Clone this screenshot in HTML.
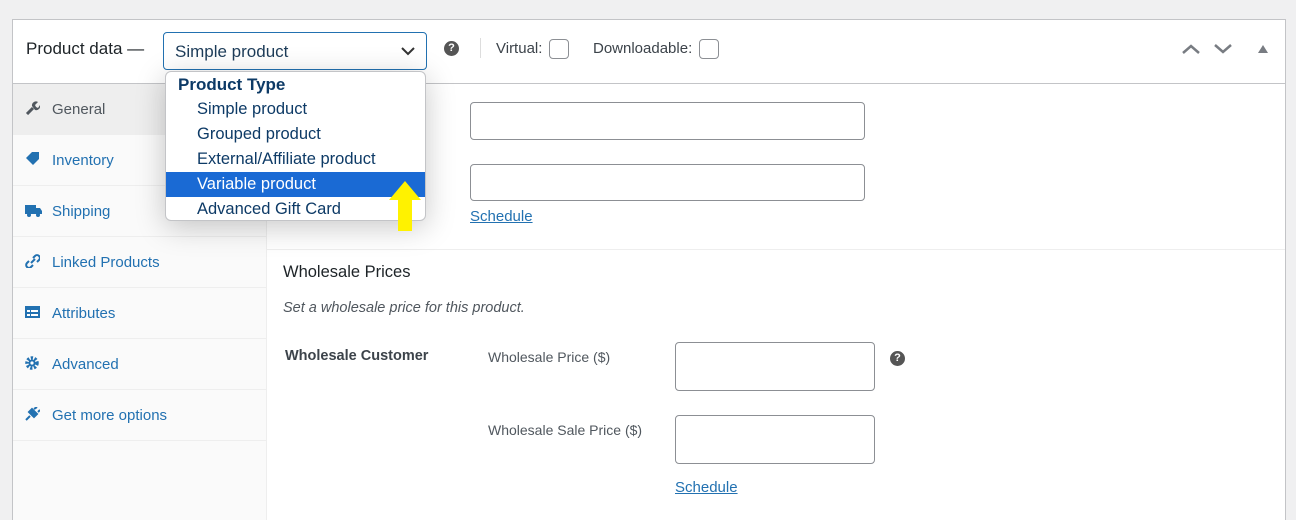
<!DOCTYPE html>
<html style="height:520px;overflow:hidden"><head><style>
*{box-sizing:border-box;margin:0;padding:0}
body{width:1296px;height:520px;background:#f0f0f1;font-family:"Liberation Sans",sans-serif;position:relative;overflow:hidden;color:#1d2327}
.a{position:absolute;white-space:nowrap}
.panel{position:absolute;left:12px;top:19px;width:1274px;height:501px;background:#fff;border:1px solid #c3c4c7;border-bottom:none}
.side{position:absolute;left:13px;top:84px;width:254px;height:436px;background:#fafafa;border-right:1px solid #eee}
.row{position:absolute;left:0;width:254px;height:51px;border-bottom:1px solid #eee;color:#2271b1;font-size:15px}
.row span{position:absolute;left:39px;top:17px}
.row i{position:absolute;left:12px;top:17px;width:15px;height:14px}
.inp{position:absolute;border:1px solid #8c8f94;border-radius:4px;background:#fff}
.lnk{color:#2271b1;text-decoration:underline;font-size:15px}
.help{position:absolute;width:15px;height:15px;border-radius:50%;background:#555;color:#fff;font-size:11px;font-weight:bold;text-align:center;line-height:15px}
.cb{position:absolute;width:20px;height:20px;border:1px solid #8c8f94;border-radius:4px;background:#fff}
.dd{position:absolute;left:165px;top:71px;width:261px;height:150px;background:#fff;border:1px solid #c3c4c7;border-radius:6px;box-shadow:0 6px 30px rgba(0,0,0,.22);font-size:16.5px;color:#0d3a66;overflow:hidden}
.dd div{position:absolute;left:0;width:100%;height:25px;padding-left:31px;line-height:25px}
</style></head><body>
<div class="panel"></div>
<div class="a" style="left:13px;top:83px;width:1272px;height:1px;background:#c3c4c7"></div>
<div class="a" style="left:26px;top:39px;font-size:17px;color:#1d2327">Product data —</div>
<div class="a" style="left:163px;top:32px;width:264px;height:38px;border:1px solid #2271b1;border-radius:4px;background:#fff"></div>
<div class="a" style="left:175px;top:42px;font-size:17px;color:#1d3c59">Simple product</div>
<svg class="a" style="left:400px;top:45px" width="16" height="12" viewBox="0 0 16 12"><path d="M2 3l6 6 6-6" fill="none" stroke="#333" stroke-width="2"/></svg>
<div class="help" style="left:444px;top:41px">?</div>
<div class="a" style="left:480px;top:38px;width:1px;height:20px;background:#ddd"></div>
<div class="a" style="left:496px;top:40px;font-size:15px;color:#3c434a">Virtual:</div>
<div class="cb" style="left:549px;top:39px"></div>
<div class="a" style="left:593px;top:40px;font-size:15px;color:#3c434a">Downloadable:</div>
<div class="cb" style="left:699px;top:39px"></div>
<svg class="a" style="left:1181px;top:42px" width="20" height="14"><path d="M2 11l8-7 8 7" fill="none" stroke="#787c82" stroke-width="2.5"/></svg>
<svg class="a" style="left:1213px;top:42px" width="20" height="14"><path d="M2 3l8 7 8-7" fill="none" stroke="#787c82" stroke-width="2.5"/></svg>
<svg class="a" style="left:1257px;top:44px" width="12" height="10"><path d="M1 9l5-8 5 8z" fill="#787c82"/></svg>

<div class="side">
<div class="row" style="top:0;background:#eee;color:#50575e"><i><svg width="15" height="14"><path d="M2 13l6-6" stroke="#50575e" stroke-width="3"/><path d="M7 5a4 4 0 0 1 6-4l-3 3 1 2 2 1 2-3a4 4 0 0 1-5 5z" fill="#50575e"/></svg></i><span>General</span></div>
<div class="row" style="top:51px"><i><svg width="15" height="14"><path d="M1 6l6-6h7v7l-6 6z" fill="#2271b1"/></svg></i><span>Inventory</span></div>
<div class="row" style="top:102px"><i><svg width="17" height="14"><path d="M0 2h11v9H0zM11 5h4l2 3v3h-6z" fill="#2271b1"/><circle cx="4" cy="12" r="2" fill="#2271b1"/><circle cx="13" cy="12" r="2" fill="#2271b1"/></svg></i><span>Shipping</span></div>
<div class="row" style="top:153px"><i><svg width="15" height="14"><path d="M6 9l4-4M4 7l-2 2a2.5 2.5 0 0 0 4 4l2-2M8 4l2-2a2.5 2.5 0 0 1 4 4l-2 2" fill="none" stroke="#2271b1" stroke-width="2"/></svg></i><span>Linked Products</span></div>
<div class="row" style="top:204px"><i><svg width="15" height="14"><rect x="0" y="1" width="15" height="12" fill="#2271b1"/><rect x="2" y="5" width="3" height="2" fill="#fff"/><rect x="6" y="5" width="7" height="2" fill="#fff"/><rect x="2" y="9" width="3" height="2" fill="#fff"/><rect x="6" y="9" width="7" height="2" fill="#fff"/></svg></i><span>Attributes</span></div>
<div class="row" style="top:255px"><i><svg width="15" height="14"><circle cx="7" cy="7" r="5" fill="none" stroke="#2271b1" stroke-width="3.5" stroke-dasharray="2.2 1.5"/><circle cx="7" cy="7" r="3.5" fill="#2271b1"/><circle cx="7" cy="7" r="1.6" fill="#fff"/></svg></i><span>Advanced</span></div>
<div class="row" style="top:306px"><i><svg width="15" height="14"><path d="M1 13l4-4M4 5l5 5 3-3-5-5zM9 2l3-2M13 5l2-2" fill="#2271b1" stroke="#2271b1" stroke-width="2"/></svg></i><span>Get more options</span></div>
</div>

<div class="inp" style="left:470px;top:102px;width:395px;height:38px"></div>
<div class="inp" style="left:470px;top:164px;width:395px;height:37px"></div>
<div class="a lnk" style="left:470px;top:208px">Schedule</div>
<div class="a" style="left:267px;top:249px;width:1018px;height:1px;background:#eee"></div>
<div class="a" style="left:283px;top:263px;font-size:16.5px;color:#1d2327">Wholesale Prices</div>
<div class="a" style="left:283px;top:300px;font-size:14.5px;font-style:italic;color:#50575e">Set a wholesale price for this product.</div>
<div class="a" style="left:285px;top:348px;font-size:14.5px;font-weight:bold;color:#3c434a">Wholesale Customer</div>
<div class="a" style="left:488px;top:349px;font-size:14px;color:#50575e">Wholesale Price ($)</div>
<div class="a" style="left:488px;top:422px;font-size:14px;color:#50575e">Wholesale Sale Price ($)</div>
<div class="inp" style="left:675px;top:342px;width:200px;height:49px"></div>
<div class="inp" style="left:675px;top:415px;width:200px;height:49px"></div>
<div class="help" style="left:890px;top:351px">?</div>
<div class="a lnk" style="left:675px;top:479px">Schedule</div>

<div class="dd">
<div style="top:0;padding-left:12px;font-weight:bold;font-size:17px">Product Type</div>
<div style="top:25px">Simple product</div>
<div style="top:50px">Grouped product</div>
<div style="top:75px">External/Affiliate product</div>
<div style="top:100px;background:#1a6ad4;color:#fff">Variable product</div>
<div style="top:125px">Advanced Gift Card</div>
</div>
<svg class="a" style="left:387px;top:180px" width="36" height="52"><path d="M18 1L34 20H25V51H11V20H2z" fill="#fff200"/></svg>
</body></html>
